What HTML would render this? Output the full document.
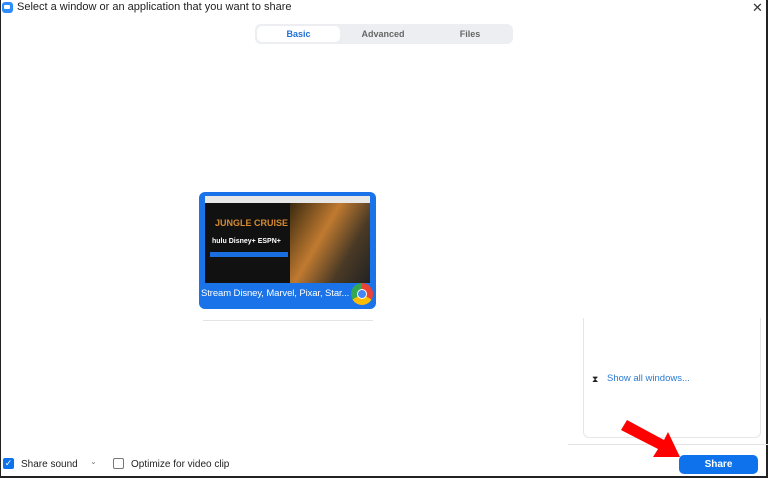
<!DOCTYPE html><html><head><style>
body{margin:0;width:768px;height:478px;overflow:hidden;background:#fff;font-family:"Liberation Sans",sans-serif;position:relative}
.a{position:absolute}
</style></head><body>
<div class="a" style="left:0;top:0;width:1px;height:478px;background:#222"></div>
<div class="a" style="right:0;top:0;width:2px;height:478px;background:#222"></div>
<div class="a" style="left:0;bottom:0;width:768px;height:2px;background:#222"></div>
<div class="a" style="left:2px;top:2px;width:11px;height:11px;border-radius:3px;background:#2d8cff"><div style="margin:3px 0 0 2px;width:6px;height:4px;background:#fff;border-radius:1px"></div></div>
<div class="a" style="left:17px;top:1px;font-size:11px;color:#222">Select a window or an application that you want to share</div>
<div class="a" style="left:752px;top:0;font-size:13px;color:#333">✕</div>
<div class="a" style="left:255px;top:24px;width:258px;height:20px;background:#eceef2;border-radius:6px"></div>
<div class="a" style="left:257px;top:26px;width:83px;height:16px;background:#fff;border-radius:5px"></div>
<div class="a" style="left:257px;top:29px;width:83px;text-align:center;font-size:9px;font-weight:bold;color:#2170d6">Basic</div>
<div class="a" style="left:343px;top:29px;width:80px;text-align:center;font-size:9px;font-weight:bold;color:#666">Advanced</div>
<div class="a" style="left:430px;top:29px;width:80px;text-align:center;font-size:9px;font-weight:bold;color:#666">Files</div>
<div class="a" style="left:199px;top:192px;width:177px;height:117px;background:#1a73e8;border-radius:6px"></div>
<div class="a" style="left:205px;top:196px;width:165px;height:87px;background:#111"></div>
<div class="a" style="left:205px;top:196px;width:165px;height:7px;background:#e8e8e8"></div>
<div class="a" style="left:290px;top:203px;width:80px;height:80px;background:linear-gradient(120deg,#3a2a10,#c07a30 40%,#4a3a25 70%,#222)"></div>
<div class="a" style="left:210px;top:252px;width:78px;height:5px;background:#1a6fe0"></div>
<div class="a" style="left:215px;top:218px;font-size:9px;font-weight:bold;color:#d68a30">JUNGLE CRUISE</div>
<div class="a" style="left:212px;top:238px;font-size:7px;font-weight:bold;color:#fff">hulu Disney+ ESPN+</div>
<div class="a" style="left:201px;top:288px;font-size:9.5px;color:#fff;white-space:nowrap;letter-spacing:-0.1px">Stream Disney, Marvel, Pixar, Star...</div>
<div class="a" style="left:351px;top:283px;width:22px;height:22px;border-radius:50%;background:conic-gradient(#ea4335 0 120deg,#fbbc05 120deg 240deg,#34a853 240deg)"><div style="margin:6px;width:10px;height:10px;border-radius:50%;background:#4285f4;border:1px solid #fff;box-sizing:border-box"></div></div>
<div class="a" style="left:203px;top:320px;width:170px;height:1px;background:#e4e4e4"></div>
<div class="a" style="left:583px;top:318px;width:176px;height:119px;border:1px solid #e6e6e6;border-top:none;border-radius:0 0 6px 6px"></div>
<div class="a" style="left:592px;top:374px;font-size:9px;color:#222">⧗</div>
<div class="a" style="left:607px;top:373px;font-size:9.5px;color:#2a7ad0">Show all windows...</div>
<div class="a" style="left:568px;top:444px;width:200px;height:1px;background:#e4e4e4"></div>
<div class="a" style="left:679px;top:455px;width:79px;height:19px;background:#0e72ed;border-radius:5px;color:#fff;font-size:10px;font-weight:bold;text-align:center;line-height:19px">Share</div>
<svg class="a" style="left:618px;top:418px" width="64" height="42"><polygon points="9,2 46,22 50,14 62,39 35,39 40,31 3,12" fill="#f00"/></svg>
<div class="a" style="left:3px;top:458px;width:11px;height:11px;background:#0e72ed;border-radius:2px;color:#fff;font-size:9px;line-height:11px;text-align:center">✓</div>
<div class="a" style="left:21px;top:459px;font-size:10px;color:#222">Share sound</div>
<div class="a" style="left:90px;top:457px;font-size:8px;color:#777">⌄</div>
<div class="a" style="left:113px;top:458px;width:11px;height:11px;border:1px solid #777;border-radius:2px;box-sizing:border-box"></div>
<div class="a" style="left:131px;top:459px;font-size:10px;color:#222">Optimize for video clip</div>
</body></html>
